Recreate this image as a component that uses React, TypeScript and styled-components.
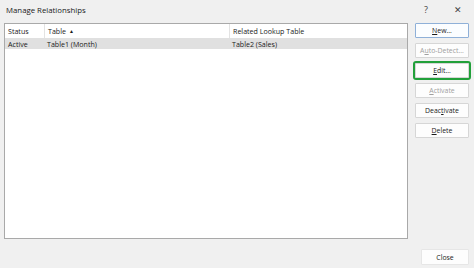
import React from 'react'
import styled, { createGlobalStyle } from 'styled-components'

const GlobalStyle = createGlobalStyle`
  html, body {
    margin: 0;
    padding: 0;
    background: #ffffff;
  }
  body {
    font-family: "Open Sans", "Noto Sans", sans-serif;
    font-size: 7.1px;
    color: #1a1a1a;
  }
`

const Dialog = styled.div`
  width: 474px;
  height: 268px;
  background: #f0f0f0;
  display: flex;
  flex-direction: column;
`

const TitleBar = styled.div`
  height: 22px;
  display: flex;
  align-items: center;
  padding: 0 0 0 6px;
  font-size: 7.8px;
`

const Title = styled.div`
  flex: 1;
`

const TitleIcon = styled.div`
  width: 32px;
  text-align: center;
  font-size: 9px;
  color: #444;
`

const Body = styled.div`
  flex: 1;
  display: flex;
  padding: 4px 5px 0 4px;
  gap: 7px;
`

const List = styled.div`
  width: 402px;
  height: 214px;
  background: #fff;
  border: 1px solid #a9a9a9;
`

const Row = styled.div<{ $header?: boolean; $selected?: boolean }>`
  display: grid;
  grid-template-columns: 39px 185px 1fr;
  height: ${p => (p.$header ? '14px' : '11px')};
  align-items: center;
  background: ${p => (p.$selected ? '#e0e0e0' : 'transparent')};
`

const HeaderCell = styled.div<{ $first?: boolean }>`
  padding-left: 3px;
  border-left: ${p => (p.$first ? 'none' : '1px solid #e3e3e3')};
  height: 14px;
  line-height: 14px;
  white-space: nowrap;
`

const Cell = styled.div`
  padding-left: 3px;
  white-space: nowrap;
`

const SortArrow = styled.span`
  font-size: 5px;
  margin-left: 3px;
  vertical-align: 1px;
`

const Side = styled.div`
  flex: 1;
  display: flex;
  flex-direction: column;
  gap: 5px;
`

const Btn = styled.div<{ $disabled?: boolean; $focus?: boolean; $accent?: boolean }>`
  height: 13px;
  background: ${p => (p.$accent ? '#fbfdff' : '#fdfdfd')};
  border: 1px solid ${p => (p.$accent ? '#8fb0d8' : '#d6d6d6')};
  border-radius: 1px;
  color: ${p => (p.$disabled ? '#a0a0a0' : '#1a1a1a')};
  display: flex;
  align-items: center;
  justify-content: center;
  font-size: 6.9px;
  white-space: nowrap;
  ${p => p.$focus && 'outline: 2px solid #21a03a; outline-offset: 0px;'}
`

const Footer = styled.div`
  display: flex;
  justify-content: flex-end;
  padding: 10px 5px 3px;
`

const CloseBtn = styled(Btn)`
  width: 46px;
  height: 14px;
  border-color: #e6e6e6;
`

const U = styled.span`
  text-decoration: underline;
`

export default function App() {
  return (
    <>
      <GlobalStyle />
      <Dialog>
        <TitleBar>
          <Title>Manage Relationships</Title>
          <TitleIcon>?</TitleIcon>
          <TitleIcon>✕</TitleIcon>
        </TitleBar>
        <Body>
          <List>
            <Row $header>
              <HeaderCell $first>Status</HeaderCell>
              <HeaderCell>
                Table<SortArrow>▲</SortArrow>
              </HeaderCell>
              <HeaderCell>Related Lookup Table</HeaderCell>
            </Row>
            <Row $selected>
              <Cell>Active</Cell>
              <Cell>Table1 (Month)</Cell>
              <Cell>Table2 (Sales)</Cell>
            </Row>
          </List>
          <Side>
            <Btn $accent>
              <U>N</U>ew...
            </Btn>
            <Btn $disabled>
              A<U>u</U>to-Detect...
            </Btn>
            <Btn $focus>
              <U>E</U>dit...
            </Btn>
            <Btn $disabled>
              <U>A</U>ctivate
            </Btn>
            <Btn>
              Deac<U>t</U>ivate
            </Btn>
            <Btn>
              <U>D</U>elete
            </Btn>
          </Side>
        </Body>
        <Footer>
          <CloseBtn>Close</CloseBtn>
        </Footer>
      </Dialog>
    </>
  )
}
